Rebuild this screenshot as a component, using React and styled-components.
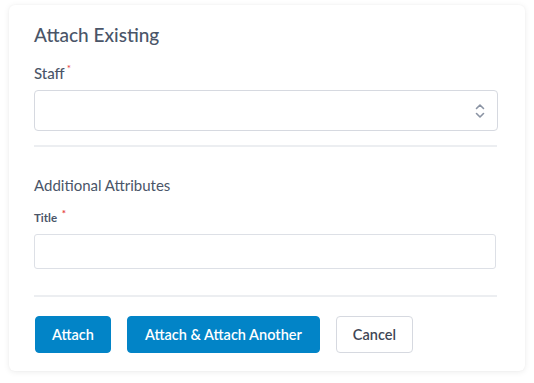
import React from "react";
import styled, { createGlobalStyle } from "styled-components";

const Global = createGlobalStyle`
  html, body { margin: 0; padding: 0; background: #ffffff; }
  body { font-family: Lato, "Open Sans", sans-serif; }
  * { box-sizing: border-box; }
`;

const Page = styled.div`
  padding: 5px 9px 13px 9px;
`;

const Card = styled.div`
  background: #fff;
  border-radius: 6px;
  box-shadow: 0 1px 6px rgba(0, 0, 0, 0.08), 0 0 2px rgba(0, 0, 0, 0.04);
  padding: 19px 27px 18px 25px;
  display: flex;
  flex-direction: column;
`;

const Heading = styled.h2`
  margin: 0;
  font-size: 19px;
  font-weight: 500;
  color: #4a5568;
  line-height: 22px;
`;

const Label = styled.label`
  display: block;
  color: #4a5568;
  font-size: ${(p) => (p.$small ? "11.5px" : "15px")};
  font-weight: ${(p) => (p.$small ? 700 : 500)};
  line-height: 16px;
  margin-top: ${(p) => p.$mt}px;
  margin-bottom: ${(p) => p.$mb}px;
`;

const Star = styled.sup`
  color: #e53e3e;
  font-size: 10px;
  margin-left: 2px;
  position: relative;
  top: ${(p) => (p.$small ? "0" : "-1px")};
`;

const Select = styled.div`
  height: 41px;
  border: 1px solid #d6d9e0;
  border-radius: 4px;
  display: flex;
  align-items: center;
  justify-content: flex-end;
  padding-right: 12px;
  color: #8a93a3;
`;

const Input = styled.div`
  height: 35px;
  margin-right: 2px;
  border: 1px solid #dde0e6;
  border-radius: 3px;
`;

const Divider = styled.hr`
  border: none;
  border-top: 2px solid #eceef1;
  margin: ${(p) => p.$m};
  margin-right: 1px;
`;

const SubHeading = styled.h3`
  margin: 0;
  font-size: 15px;
  font-weight: 400;
  color: #4a5568;
  line-height: 18px;
`;

const Buttons = styled.div`
  display: flex;
  gap: 16px;
  padding-left: 1px;
  margin-top: 19px;
`;

const Button = styled.button`
  height: 37px;
  padding: 0 ${(p) => p.$px}px;
  border-radius: 4px;
  font-family: Lato, "Open Sans", sans-serif;
  font-size: 14.5px;
  font-weight: 600;
  border: 1px solid ${(p) => (p.$primary ? "#0284c7" : "#d6d9e0")};
  background: ${(p) => (p.$primary ? "#0284c7" : "#ffffff")};
  color: ${(p) => (p.$primary ? "#ffffff" : "#3f4756")};
`;

const Chevrons = () => (
  <svg width="10" height="16" viewBox="0 0 10 16" fill="none" stroke="currentColor" strokeWidth="1.6" strokeLinecap="round" strokeLinejoin="round">
    <path d="M1.5 5.5 L5 2 L8.5 5.5" />
    <path d="M1.5 10.5 L5 14 L8.5 10.5" />
  </svg>
);

export default function App() {
  return (
    <>
      <Global />
      <Page>
        <Card>
          <Heading>Attach Existing</Heading>
          <Label $mt={15} $mb={9}>
            Staff<Star>*</Star>
          </Label>
          <Select>
            <Chevrons />
          </Select>
          <Divider $m="14px 0 0 0" />
          <SubHeading style={{ marginTop: 29 }}>Additional Attributes</SubHeading>
          <Label $small $mt={11} $mb={8}>
            Title <Star $small>*</Star>
          </Label>
          <Input />
          <Divider $m="26px 0 0 0" />
          <Buttons>
            <Button $primary $px={16}>Attach</Button>
            <Button $primary $px={17}>Attach &amp; Attach Another</Button>
            <Button $px={16}>Cancel</Button>
          </Buttons>
        </Card>
      </Page>
    </>
  );
}
